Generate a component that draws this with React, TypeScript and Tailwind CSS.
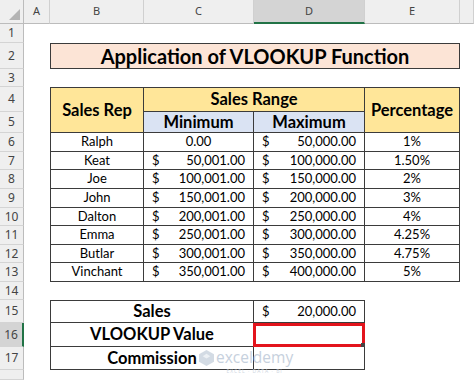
import React from 'react';

// Sheet data for rows 6-13
const rows = [
  { name: 'Ralph', min: '0.00', max: '50,000.00', pct: '1%' },
  { name: 'Keat', min: '50,001.00', max: '100,000.00', pct: '1.50%' },
  { name: 'Joe', min: '100,001.00', max: '150,000.00', pct: '2%' },
  { name: 'John', min: '150,001.00', max: '200,000.00', pct: '3%' },
  { name: 'Dalton', min: '200,001.00', max: '250,000.00', pct: '4%' },
  { name: 'Emma', min: '250,001.00', max: '300,000.00', pct: '4.25%' },
  { name: 'Butlar', min: '300,001.00', max: '350,000.00', pct: '4.75%' },
  { name: 'Vinchant', min: '350,001.00', max: '400,000.00', pct: '5%' },
];

const rowStarts = [
  'row-start-7',
  'row-start-8',
  'row-start-9',
  'row-start-10',
  'row-start-11',
  'row-start-12',
  'row-start-13',
  'row-start-14',
];

const headerRowStarts = [
  'row-start-2', 'row-start-3', 'row-start-4', 'row-start-5', 'row-start-6', 'row-start-7',
  'row-start-8', 'row-start-9', 'row-start-10', 'row-start-11', 'row-start-12', 'row-start-13',
  'row-start-14', 'row-start-15', 'row-start-16', 'row-start-17', 'row-start-18', 'row-start-19',
];

const line = 'border-[#3b3b3b]';

function ColHeader({ label, col, selected }: { label: string; col: string; selected?: boolean }) {
  return (
    <div
      className={`row-start-1 ${col} flex items-center justify-center border-r border-[#d0d0d0] text-[11px] text-[#444] font-['Noto_Sans',sans-serif] ${
        selected ? 'bg-[#d4d4d4] border-b-2 border-b-[#217346]' : 'bg-[#efefef] border-b border-b-[#bcbcbc]'
      }`}
    >
      {label}
    </div>
  );
}

function Money({ value }: { value: string }) {
  return (
    <div className="flex h-full w-full items-center justify-between pl-[8px] pr-[8px]">
      <span>$</span>
      <span>{value}</span>
    </div>
  );
}

export default function App() {
  return (
    <div className="relative grid h-[380px] w-[474px] overflow-hidden bg-white grid-cols-[24px_26px_94px_110px_111px_95px_1fr] grid-rows-[24px_19px_26px_18px_25px_21px_19px_18px_19px_19px_18px_19px_18px_19px_18px_23px_24px_23px_1fr] font-['Lato',sans-serif] text-[13px] text-black">
      {/* corner */}
      <div className="row-start-1 col-start-1 relative bg-[#efefef] border-r border-b border-[#bcbcbc]">
        <svg className="absolute right-[3px] bottom-[3px]" width="11" height="11" viewBox="0 0 11 11">
          <polygon points="11,0 11,11 0,11" fill="#b4b4b4" />
        </svg>
      </div>

      {/* column headers */}
      <ColHeader label="A" col="col-start-2" />
      <ColHeader label="B" col="col-start-3" />
      <ColHeader label="C" col="col-start-4" />
      <ColHeader label="D" col="col-start-5" selected />
      <ColHeader label="E" col="col-start-6" />
      <ColHeader label="" col="col-start-7" />

      {/* row headers */}
      {headerRowStarts.map((r, i) => (
        <div
          key={r}
          className={`col-start-1 ${r} flex items-center justify-center border-b border-[#d4d4d4] text-[12px] text-[#444] font-['Noto_Sans',sans-serif] ${
            i === 15 ? 'bg-[#d4d4d4] border-r-2 border-r-[#217346]' : 'bg-[#efefef] border-r border-r-[#bcbcbc]'
          }`}
        >
          {i < 17 ? i + 1 : ''}
        </div>
      ))}

      {/* title */}
      <div className={`row-start-3 col-start-3 col-span-4 flex items-center justify-center border ${line} bg-[#fce4d6] text-[20px] font-bold`}>
        Application of VLOOKUP Function
      </div>

      {/* table header */}
      <div className={`row-start-5 row-span-2 col-start-3 flex items-center justify-center border ${line} bg-[#ffe699] text-[16.5px] font-bold`}>
        Sales Rep
      </div>
      <div className={`row-start-5 col-start-4 col-span-2 flex items-center justify-center border-t border-r border-b ${line} bg-[#ffe699] text-[16.5px] font-bold`}>
        Sales Range
      </div>
      <div className={`row-start-5 row-span-2 col-start-6 flex items-center justify-center border-t border-r border-b ${line} bg-[#ffe699] text-[16.5px] font-bold`}>
        Percentage
      </div>
      <div className={`row-start-6 col-start-4 flex items-center justify-center border-r border-b ${line} bg-[#dae3f3] text-[16.5px] font-bold`}>
        Minimum
      </div>
      <div className={`row-start-6 col-start-5 flex items-center justify-center border-r border-b ${line} bg-[#dae3f3] text-[16.5px] font-bold`}>
        Maximum
      </div>

      {/* table body */}
      {rows.map((r, i) => (
        <React.Fragment key={r.name}>
          <div className={`${rowStarts[i]} col-start-3 flex items-center justify-center border-l border-r border-b ${line}`}>
            {r.name}
          </div>
          <div className={`${rowStarts[i]} col-start-4 flex items-center justify-center border-r border-b ${line}`}>
            {i === 0 ? r.min : <Money value={r.min} />}
          </div>
          <div className={`${rowStarts[i]} col-start-5 flex items-center justify-center border-r border-b ${line}`}>
            <Money value={r.max} />
          </div>
          <div className={`${rowStarts[i]} col-start-6 flex items-center justify-center border-r border-b ${line}`}>
            {r.pct}
          </div>
        </React.Fragment>
      ))}

      {/* lookup block */}
      <div className={`row-start-16 col-start-3 col-span-2 flex items-center justify-center border ${line} text-[16.5px] font-bold`}>
        Sales
      </div>
      <div className={`row-start-16 col-start-5 border-t border-r border-b ${line}`}>
        <Money value="20,000.00" />
      </div>
      <div className={`row-start-17 col-start-3 col-span-2 flex items-center justify-center border-l border-r border-b ${line} text-[16.5px] font-bold`}>
        VLOOKUP Value
      </div>
      <div className={`row-start-17 col-start-5 relative border-r border-b ${line}`}>
        <div className="absolute -left-px -right-px top-0 -bottom-px border-[3px] border-[#e3141c]" />
        <div className="absolute -right-[1px] -bottom-[1px] h-[4px] w-[4px] bg-[#444]" />
      </div>
      <div className={`row-start-18 col-start-3 col-span-2 flex items-center justify-center border-l border-r border-b ${line} text-[16.5px] font-bold`}>
        Commission
      </div>
      <div className={`row-start-18 col-start-5 border-r border-b ${line}`} />

      {/* watermark */}
      <div className="absolute left-[199px] top-[350px] flex items-start gap-[2px] opacity-80 pointer-events-none">
        <svg width="15" height="16" viewBox="0 0 16 17">
          <polygon points="8,0 16,4.5 16,12.5 8,17 0,12.5 0,4.5" fill="#c9d3de" />
          <polygon points="8,4 12,6.5 8,9 4,6.5" fill="#e9eef3" />
        </svg>
        <div className="flex flex-col items-center">
          <span className="block h-[15px] text-[15.5px] leading-[15px] font-['Open_Sans',sans-serif] text-[#b9c6d6]">exceldemy</span>
          <span className="block mt-[4px] h-[5px] text-[5px] leading-[5px] tracking-[1px] text-[#c4ceda] font-['Open_Sans',sans-serif]">EXCEL · DATA · BI</span>
        </div>
      </div>
    </div>
  );
}
